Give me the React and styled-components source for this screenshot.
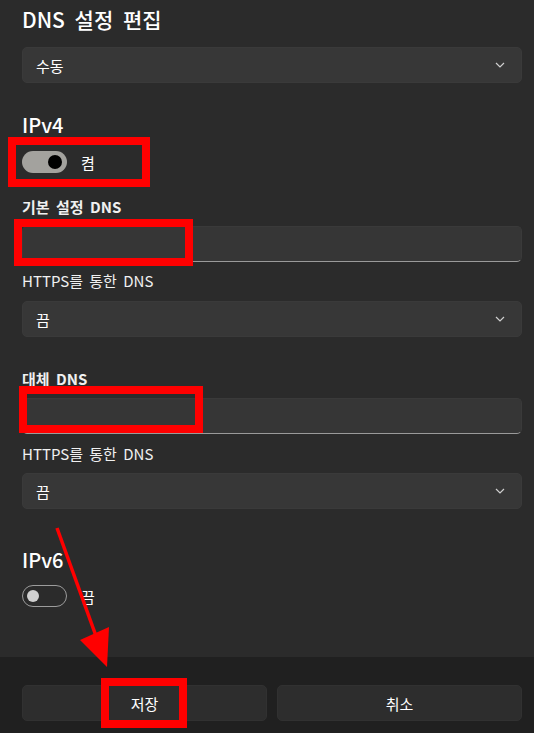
import React from "react";
import styled, { createGlobalStyle } from "styled-components";

const Global = createGlobalStyle`
  html, body { margin: 0; padding: 0; background: #2b2b2b; }
  body { font-family: "Noto Sans CJK KR", "Noto Sans", sans-serif; color: #ffffff; }
  * { box-sizing: border-box; }
`;

const Page = styled.div`
  position: relative;
  width: 534px;
  height: 733px;
  display: flex;
  flex-direction: column;
  background: #2b2b2b;
  overflow: hidden;
`;

const Content = styled.div`
  flex: 1;
  display: flex;
  flex-direction: column;
  padding: 0 12px 0 22px;
`;

const Title = styled.h1`
  margin: 5px 0 0;
  font-size: 21px;
  line-height: 28px;
  font-weight: 500;
  word-spacing: 5px;
  color: #ffffff;
`;

const SectionTitle = styled.h2`
  margin: ${(p) => p.$mt}px 0 0;
  font-size: 20px;
  line-height: 28px;
  font-weight: 500;
  color: #ffffff;
`;

const FieldLabel = styled.div`
  margin-top: ${(p) => p.$mt}px;
  font-size: 15px;
  line-height: 20px;
  font-weight: ${(p) => (p.$bold ? 700 : 400)};
  word-spacing: 3px;
  color: #f0f0f0;
`;

const Select = styled.div`
  margin-top: ${(p) => p.$mt}px;
  height: 36px;
  display: flex;
  align-items: center;
  justify-content: space-between;
  padding: 0 16px 0 13px;
  background: #373737;
  border: 1px solid #3a3a3a;
  border-radius: 5px;
  font-size: 15px;
  color: #ffffff;
`;

const Chevron = styled.svg`
  width: 10px;
  height: 6px;
`;

const Field = styled.div`
  position: relative;
  margin-top: ${(p) => p.$mt}px;
`;

const Input = styled.div`
  height: 36px;
  background: #363636;
  border: 1px solid #3a3a3a;
  border-bottom: 1px solid #9a9a9a;
  border-radius: 5px;
`;

const Highlight = styled.div`
  position: absolute;
  left: ${(p) => p.$l}px;
  top: ${(p) => p.$t}px;
  width: ${(p) => p.$w}px;
  height: ${(p) => p.$h}px;
  border: 8px solid #ff0000;
  pointer-events: none;
`;

const ToggleRow = styled.div`
  position: relative;
  margin-top: ${(p) => p.$mt}px;
  display: flex;
  align-items: center;
  gap: 14px;
  height: 22px;
`;

const Switch = styled.div`
  position: relative;
  width: 45px;
  height: 22px;
  border-radius: 11px;
  background: ${(p) => (p.$on ? "#a3a29e" : "transparent")};
  border: ${(p) => (p.$on ? "none" : "1.5px solid #9c9c9c")};
  flex-shrink: 0;
`;

const Knob = styled.div`
  position: absolute;
  top: 50%;
  transform: translateY(-50%);
  border-radius: 50%;
  width: ${(p) => (p.$on ? 14 : 12)}px;
  height: ${(p) => (p.$on ? 14 : 12)}px;
  background: ${(p) => (p.$on ? "#000000" : "#d0d0d0")};
  ${(p) => (p.$on ? "right: 5px;" : "left: 4px;")}
`;

const ToggleText = styled.span`
  font-size: 15px;
  color: #ffffff;
`;

const Footer = styled.div`
  height: 76px;
  background: #202020;
  padding: 28px 12px 0 22px;
  display: grid;
  grid-template-columns: 1fr 1fr;
  column-gap: 10px;
  align-items: start;
`;

const Button = styled.div`
  position: relative;
  height: 36px;
  display: flex;
  align-items: center;
  justify-content: center;
  background: #2d2d2d;
  border: 1px solid #313131;
  border-radius: 5px;
  font-size: 15px;
  color: #ffffff;
`;

const Arrow = styled.svg`
  position: absolute;
  left: 0;
  top: 0;
  width: 534px;
  height: 733px;
  pointer-events: none;
`;

const ChevronIcon = () => (
  <Chevron viewBox="0 0 10 6">
    <path d="M1 1 L5 5 L9 1" fill="none" stroke="#cfcfcf" strokeWidth="1.2" />
  </Chevron>
);

export default function App() {
  return (
    <Page>
      <Global />
      <Content>
        <Title>DNS 설정 편집</Title>
        <Select $mt={14}>
          <span>수동</span>
          <ChevronIcon />
        </Select>

        <SectionTitle $mt={28}>IPv4</SectionTitle>
        <ToggleRow $mt={12}>
          <Switch $on>
            <Knob $on />
          </Switch>
          <ToggleText>켬</ToggleText>
          <Highlight $l={-14} $t={-14} $w={142} $h={50} />
        </ToggleRow>

        <FieldLabel $bold $mt={24}>기본 설정 DNS</FieldLabel>
        <Field $mt={9}>
          <Input />
          <Highlight $l={-8} $t={-7} $w={179} $h={47} />
        </Field>
        <FieldLabel $mt={9}>HTTPS를 통한 DNS</FieldLabel>
        <Select $mt={10}>
          <span>끔</span>
          <ChevronIcon />
        </Select>

        <FieldLabel $bold $mt={32}>대체 DNS</FieldLabel>
        <Field $mt={9}>
          <Input />
          <Highlight $l={-3} $t={-12} $w={184} $h={47} />
        </Field>
        <FieldLabel $mt={10}>HTTPS를 통한 DNS</FieldLabel>
        <Select $mt={9}>
          <span>끔</span>
          <ChevronIcon />
        </Select>

        <SectionTitle $mt={37}>IPv6</SectionTitle>
        <ToggleRow $mt={11}>
          <Switch>
            <Knob />
          </Switch>
          <ToggleText>끔</ToggleText>
        </ToggleRow>
      </Content>
      <Footer>
        <Button>
          저장
          <Highlight $l={78} $t={-8} $w={86} $h={50} />
        </Button>
        <Button>취소</Button>
      </Footer>
      <Arrow viewBox="0 0 534 733">
        <line x1="57" y1="528" x2="96" y2="636" stroke="#ff0000" strokeWidth="3.5" />
        <polygon points="107,667 80,640 109,627" fill="#ff0000" />
      </Arrow>
    </Page>
  );
}
